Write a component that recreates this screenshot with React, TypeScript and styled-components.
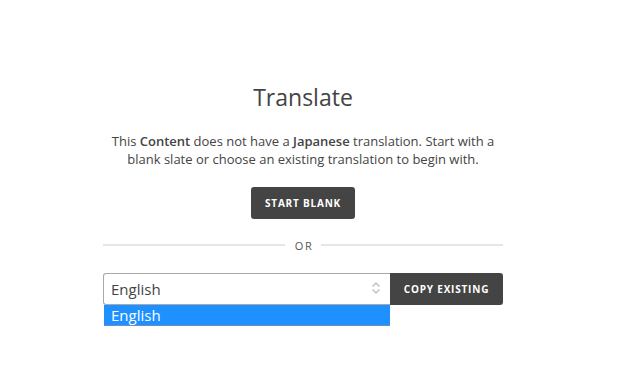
import React, { useState } from 'react';
import styled, { createGlobalStyle } from 'styled-components';

const GlobalStyle = createGlobalStyle`
    html, body {
        margin: 0;
        padding: 0;
        background: #fff;
        font-family: "Open Sans", "Liberation Sans", sans-serif;
        color: #444;
    }
`;

const Page = styled.div`
    box-sizing: border-box;
    min-height: 100vh;
    display: flex;
    justify-content: center;
    align-items: flex-start;
    padding: 81px 19px 0 0;
`;

const Panel = styled.div`
    width: 400px;
    display: flex;
    flex-direction: column;
    align-items: center;
`;

const Title = styled.h1`
    margin: 0;
    font-size: 23px;
    line-height: 32px;
    font-weight: 400;
    color: #444;
`;

const Intro = styled.p`
    margin: 19px 0 0;
    font-size: 13px;
    line-height: 18px;
    text-align: center;
    color: #444;

    strong {
        font-weight: 600;
    }
`;

const DarkButton = styled.button<{ $joined?: boolean }>`
    height: 32px;
    padding: 0;
    border: none;
    border-radius: ${p => (p.$joined ? '0 3px 3px 0' : '3px')};
    background: #444;
    color: #fff;
    font-family: "Open Sans", "Liberation Sans", sans-serif;
    font-size: 10px;
    font-weight: 700;
    letter-spacing: 0.8px;
    text-transform: uppercase;
    white-space: nowrap;
    cursor: pointer;
    flex-shrink: 0;
`;

const StartButton = styled(DarkButton)`
    margin-top: 19px;
    width: 104px;
`;

const Divider = styled.div`
    margin-top: 18px;
    width: 100%;
    height: 16px;
    display: flex;
    align-items: center;
    gap: 8px;

    &::before, &::after {
        content: '';
        flex: 1;
        height: 2px;
        background: #e6e6e6;
    }

    span {
        font-size: 11px;
        letter-spacing: 1.5px;
        color: #555;
        padding-left: 2px;
    }
`;

const CopyRow = styled.div`
    margin-top: 20px;
    width: 100%;
    display: flex;
    align-items: flex-start;
`;

const SelectWrap = styled.div`
    flex: 1;
    display: flex;
    flex-direction: column;
`;

const SelectBox = styled.div`
    height: 32px;
    box-sizing: border-box;
    border: 1px solid #a9a9a9;
    border-right: none;
    border-radius: 3px 0 0 3px;
    display: flex;
    align-items: center;
    justify-content: space-between;
    padding: 0 9px 3px 7px;
    font-size: 15px;
    color: #444;
    background: #fff;
    cursor: default;

    span {
        margin-top: 3px;
    }
`;

/* the open list of the select, shown right under its box */
const OptionList = styled.div`
    margin-left: 1px;
    border-bottom: 1px solid #6c8fc0;
    background: #fff;
`;

const OptionItem = styled.div<{ $active?: boolean }>`
    height: 20px;
    line-height: 20px;
    padding-left: 7px;
    font-size: 15px;
    background: ${p => (p.$active ? '#1e90ff' : '#fff')};
    color: ${p => (p.$active ? '#fff' : '#444')};
`;

const CopyButton = styled(DarkButton)`
    width: 113px;
`;

const Arrows = () => (
    <svg width="10" height="12" viewBox="0 0 10 12" fill="none" stroke="#c2c2c2" strokeWidth="1.5">
        <path d="M1.5 4.5 L5 1 L8.5 4.5" />
        <path d="M1.5 7.5 L5 11 L8.5 7.5" />
    </svg>
);

export default function App() {
    const [language] = useState('English');

    return (
        <>
            <GlobalStyle />
            <Page>
                <Panel>
                    <Title>Translate</Title>
                    <Intro>
                        This <strong>Content</strong> does not have a <strong>Japanese</strong> translation. Start with a
                        <br />
                        blank slate or choose an existing translation to begin with.
                    </Intro>
                    <StartButton>Start Blank</StartButton>
                    <Divider><span>OR</span></Divider>
                    <CopyRow>
                        <SelectWrap>
                            <SelectBox>
                                <span>{language}</span>
                                <Arrows />
                            </SelectBox>
                            <OptionList>
                                <OptionItem $active>{language}</OptionItem>
                            </OptionList>
                        </SelectWrap>
                        <CopyButton $joined>Copy Existing</CopyButton>
                    </CopyRow>
                </Panel>
            </Page>
        </>
    );
}
